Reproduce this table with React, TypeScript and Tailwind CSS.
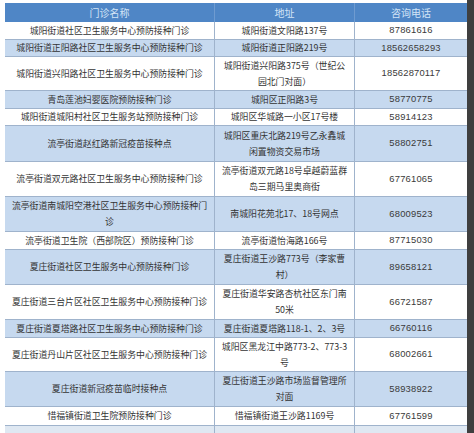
const rows: { name: string[]; addr: string[]; phone: string; h: string }[] = [
  { name: ['城阳街道社区卫生服务中心预防接种门诊'], addr: ['城阳街道文阳路137号'], phone: '87861616', h: 'h-[18px]' },
  { name: ['城阳街道正阳路社区卫生服务中心预防接种门诊'], addr: ['城阳街道正阳路219号'], phone: '18562658293', h: 'h-[17px]' },
  { name: ['城阳街道兴阳路社区卫生服务中心预防接种门诊'], addr: ['城阳街道兴阳路375号（世纪公', '园北门对面）'], phone: '18562870117', h: 'h-[34px]' },
  { name: ['青岛莲池妇婴医院预防接种门诊'], addr: ['城阳区正阳路3号'], phone: '58770775', h: 'h-[18px]' },
  { name: ['城阳街道城阳村社区卫生服务站预防接种门诊'], addr: ['城阳区华城路一小区17号楼'], phone: '58914123', h: 'h-[17px]' },
  { name: ['流亭街道赵红路新冠疫苗接种点'], addr: ['城阳区重庆北路219号乙永鑫城', '闲置物资交易市场'], phone: '58802751', h: 'h-[36px]' },
  { name: ['流亭街道双元路社区卫生服务中心预防接种门诊'], addr: ['流亭街道双元路18号卓越蔚蓝群', '岛三期马里奥商街'], phone: '67761065', h: 'h-[35px]' },
  { name: ['流亭街道南城阳空港社区卫生服务中心预防接种门', '诊'], addr: ['南城阳花苑北17、18号网点'], phone: '68009523', h: 'h-[35px]' },
  { name: ['流亭街道卫生院（西部院区）预防接种门诊'], addr: ['流亭街道怡海路166号'], phone: '87715030', h: 'h-[18px]' },
  { name: ['夏庄街道社区卫生服务中心预防接种门诊'], addr: ['夏庄街道王沙路773号（李家曹', '村）'], phone: '89658121', h: 'h-[35px]' },
  { name: ['夏庄街道三台片区社区卫生服务中心预防接种门诊'], addr: ['夏庄街道华安路杏杭社区东门南', '50米'], phone: '66721587', h: 'h-[35px]' },
  { name: ['夏庄街道夏塔路社区卫生服务中心预防接种门诊'], addr: ['夏庄街道夏塔路118-1、2、3号'], phone: '66760116', h: 'h-[18px]' },
  { name: ['夏庄街道丹山片区社区卫生服务中心预防接种门诊'], addr: ['城阳区黑龙江中路773-2、773-3', '号'], phone: '68002661', h: 'h-[34px]' },
  { name: ['夏庄街道新冠疫苗临时接种点'], addr: ['夏庄街道王沙路市场监督管理所', '对面'], phone: '58938922', h: 'h-[35px]' },
  { name: ['惜福镇街道卫生院预防接种门诊'], addr: ['惜福镇街道王沙路1169号'], phone: '67761599', h: 'h-[19px]' },
];

const cjk = "font-['Noto_Sans_CJK_SC','Noto_Sans',sans-serif]";

function Cell({ lines, last }: { lines: string[]; last?: boolean }) {
  return (
    <div
      className={`flex flex-col items-center justify-center whitespace-nowrap leading-[16px] ${
        last ? '' : 'border-r border-[#9fb3cc]'
      }`}
    >
      {lines.map((l) => (
        <span key={l}>{l}</span>
      ))}
    </div>
  );
}

export default function App() {
  return (
    <div className={`flex h-[433px] w-[474px] overflow-hidden bg-white ${cjk}`}>
      <div className="flex-1 pl-[5px] pt-[3px]">
        <div className="w-[462px]">
          {/* Header */}
          <div className="grid h-[19px] grid-cols-[210px_140px_112px] bg-[#4f86c6] text-[10px] text-[#d3e4f6]">
            <div className="flex items-center justify-center border-r border-[#6f9bd0]">门诊名称</div>
            <div className="flex items-center justify-center border-r border-[#6f9bd0]">地址</div>
            <div className="flex items-center justify-center">咨询电话</div>
          </div>

          {rows.map((r, i) => (
            <div
              key={r.phone}
              className={`grid grid-cols-[210px_140px_112px] border-b border-[#9fb3cc] text-[8.9px] text-[#333] ${r.h} ${
                i % 2 === 1 ? 'bg-[#c6d9ef]' : 'bg-white'
              }`}
            >
              <Cell lines={r.name} />
              <Cell lines={r.addr} />
              <div className="flex items-center justify-center font-['Liberation_Sans',sans-serif] text-[9.4px] tracking-[0.2px] text-[#3a3a3a]">
                {r.phone}
              </div>
            </div>
          ))}

          {/* partial next row */}
          <div className="grid h-[8px] grid-cols-[210px_140px_112px] bg-[#dfe8f2]">
            <div className="border-r border-[#9fb3cc]" />
            <div className="border-r border-[#9fb3cc]" />
            <div />
          </div>
        </div>
      </div>
      <div className="w-[7px] bg-[#3f3f3f]" />
    </div>
  );
}
